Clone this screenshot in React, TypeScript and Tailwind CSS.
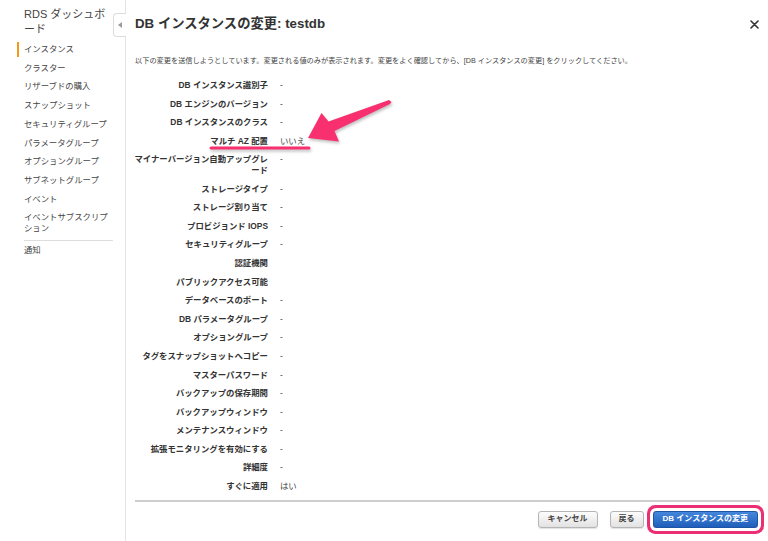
const sideItems = [
  { label: "インスタンス", active: true },
  { label: "クラスター" },
  { label: "リザーブドの購入" },
  { label: "スナップショット" },
  { label: "セキュリティグループ" },
  { label: "パラメータグループ" },
  { label: "オプショングループ" },
  { label: "サブネットグループ" },
  { label: "イベント" },
  { label: "イベントサブスクリプション" },
];

const rows: [string, string][] = [
  ["DB インスタンス識別子", "-"],
  ["DB エンジンのバージョン", "-"],
  ["DB インスタンスのクラス", "-"],
  ["マルチ AZ 配置", "いいえ"],
  ["マイナーバージョン自動アップグレード", "-"],
  ["ストレージタイプ", "-"],
  ["ストレージ割り当て", "-"],
  ["プロビジョンド IOPS", "-"],
  ["セキュリティグループ", "-"],
  ["認証機関", ""],
  ["パブリックアクセス可能", ""],
  ["データベースのポート", "-"],
  ["DB パラメータグループ", "-"],
  ["オプショングループ", "-"],
  ["タグをスナップショットへコピー", "-"],
  ["マスターパスワード", "-"],
  ["バックアップの保存期間", "-"],
  ["バックアップウィンドウ", "-"],
  ["メンテナンスウィンドウ", "-"],
  ["拡張モニタリングを有効にする", "-"],
  ["詳細度", "-"],
  ["すぐに適用", "はい"],
];

const Sidebar = () => (
  <aside className="w-[125px] shrink-0 pl-[24px] pr-[12px] pt-[7px] text-[#444]">
    <div className="text-[11px] leading-[15px] [line-break:loose]">RDS ダッシュボード</div>
    <div className="mt-[3px] text-[8.4px]">
      {sideItems.map((item) => (
        <div key={item.label} className="py-[2px]">
          <div
            className={
              item.active
                ? "-ml-[7px] border-l-2 border-[#f39a1c] py-[2px] pl-[5px] leading-[10.7px]"
                : "py-[2px] leading-[10.7px] [line-break:loose]"
            }
          >
            {item.label}
          </div>
        </div>
      ))}
      <div className="mt-[2px] border-t border-[#dddddd] py-[4px] leading-[10.7px]">通知</div>
    </div>
  </aside>
);

const grayButton =
  "h-[17px] rounded-[3px] border border-[#b5b5b5] bg-linear-to-b from-[#fdfdfd] to-[#e2e2e2] text-[8px] font-bold leading-none text-[#444] shadow-[0_1px_1px_rgba(0,0,0,0.12)]";

export default function App() {
  return (
    <div className="relative flex h-screen w-full bg-white font-['Liberation_Sans','Noto_Sans_CJK_JP',sans-serif] text-[#333]">
      <Sidebar />

      <main className="relative flex flex-1 flex-col border-l border-[#e4e4e4] pl-[9px] pr-[8px] pt-[16px]">
        {/* collapse handle */}
        <div className="absolute -left-[13px] top-[13px] flex h-[24px] w-[13px] items-center justify-center rounded-l-[4px] border border-r-0 border-[#dcdcdc] bg-white">
          <svg width="4" height="6" viewBox="0 0 4 6">
            <path d="M4 0 L0 3 L4 6 Z" fill="#9a9a9a" />
          </svg>
        </div>

        <div className="flex items-center justify-between">
          <h1 className="text-[13.3px] font-bold leading-[16px] text-[#333]">DB インスタンスの変更: testdb</h1>
          <svg width="9" height="9" viewBox="0 0 9 9" className="mr-[1px]">
            <path d="M1 1 L8 8 M8 1 L1 8" stroke="#333" strokeWidth="1.6" strokeLinecap="round" />
          </svg>
        </div>

        <p className="mt-[24px] text-[7.2px] leading-[10px] text-[#444]">
          以下の変更を送信しようとしています。変更される値のみが表示されます。変更をよく確認してから、[DB インスタンスの変更] をクリックしてください。
        </p>

        <div className="-ml-[2px] mt-[10px] text-[8.4px]">
          {rows.map(([label, value]) => (
            <div key={label} className="flex py-[4px] leading-[10.6px]">
              <div className="w-[135px] shrink-0 text-right font-bold text-[#333] [line-break:loose]">{label}</div>
              <div className="ml-[12px] text-[#444]">{value}</div>
            </div>
          ))}
        </div>

        <div className="mt-[4px] border-t-2 border-[#cdcdcd]" />

        <div className="mt-[9px] flex items-center justify-end gap-[9px] pr-[2px]">
          <button className={`${grayButton} px-[9px]`}>キャンセル</button>
          <button className={`${grayButton} ml-[3px] px-[8px]`}>戻る</button>
          <button className="h-[17px] rounded-[3px] border border-[#1d55a6] bg-linear-to-b from-[#4487dc] to-[#1f5fba] px-[9px] text-[8px] font-bold leading-none text-white ring-[3px] ring-[#ec2f75] ring-offset-[3px] ring-offset-white">
            DB インスタンスの変更
          </button>
        </div>
      </main>

      {/* annotation arrow + underline */}
      <svg
        className="pointer-events-none absolute left-0 top-0 drop-shadow-[1px_2px_1.5px_rgba(0,0,0,0.25)]"
        width="768"
        height="541"
        viewBox="0 0 768 541"
      >
        <path
          d="M308 138 L321.5 113 L328.5 121.5 L389 100 L391.5 102 L390 104 L334.5 131 L339 141.5 Z"
          fill="#f8306f"
        />
        <line x1="211" y1="148" x2="309" y2="148" stroke="#f8306f" strokeWidth="3" strokeLinecap="round" />
      </svg>
    </div>
  );
}
